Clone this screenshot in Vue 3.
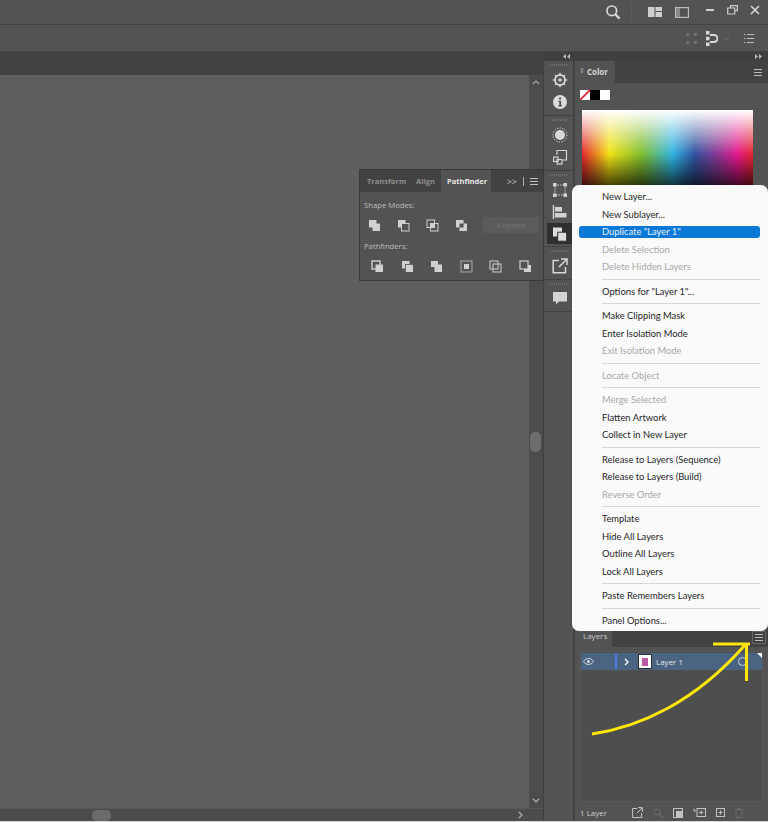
<template>
  <div class="app">
    <header class="titlebar">
      <svg class="tb-ic search" width="16" height="16" viewBox="0 0 16 16"><circle cx="6.8" cy="6.8" r="4.8" fill="none" stroke="#d8d8d8" stroke-width="1.7" /><path d="M10.4 10.4 14.6 14.6" stroke="#d8d8d8" stroke-width="2.2" /></svg>
      <span class="tb-sep"></span>
      <svg class="tb-ic" width="14" height="10" viewBox="0 0 14 10"><path d="M0 0h6.5v10H0zM7.5 0H14v4H7.5zM7.5 5H14v5H7.5z" fill="#cfcfcf" /></svg>
      <svg class="tb-ic" width="14" height="11" viewBox="0 0 14 11"><rect x=".6" y=".6" width="12.8" height="9.8" fill="none" stroke="#bdbdbd" stroke-width="1.2" /><rect x="1" y="1" width="4" height="9" fill="#8a8a8a" /></svg>
      <div class="win-btns">
        <svg width="10" height="10" viewBox="0 0 10 10"><path d="M1 5h8" stroke="#cfcfcf" stroke-width="2" /></svg>
        <svg width="11" height="10" viewBox="0 0 11 10"><path d="M3.5 2.5V.7h6.8v5H8M.7 3h7v6h-7z" fill="none" stroke="#cfcfcf" stroke-width="1.2" /></svg>
        <svg width="10" height="10" viewBox="0 0 10 10"><path d="M1 1l8 8M9 1l-8 8" stroke="#d4d4d4" stroke-width="1.7" /></svg>
      </div>
    </header>

    <div class="controlbar">
      <svg width="11" height="11" viewBox="0 0 11 11"><path d="M0 0h3v3H0zM8 0h3v3H8zM0 8h3v3H0zM8 8h3v3H8z" fill="#6e6e6e" /></svg>
      <svg class="cb-align" width="12" height="15" viewBox="0 0 12 15"><path d="M0 0h3.500v3.500H0zM0 5.700h3.500v3.500H0zM0 11.500h3.500V15H0z" fill="#d8d8d8" /><path d="M4 4h4a3.500 3.500 0 0 1 0 7H4" fill="none" stroke="#d8d8d8" stroke-width="2" /></svg>
      <svg class="cb-chev" width="7" height="5" viewBox="0 0 7 5"><path d="M.5 1 3.500 4 6.500 1" fill="none" stroke="#707070" /></svg>
      <svg class="cb-list" width="10" height="9" viewBox="0 0 10 9"><path d="M0 .5h1.500M3 .5h7M0 4.500h1.500M3 4.500h7M0 8.500h1.500M3 8.500h7" stroke="#bcbcbc" /></svg>
    </div>

    <div class="workspace">
      <div class="docarea">
        <div class="doctabs"></div>
        <div class="canvas-row">
          <div class="canvas"></div>
          <div class="vscroll">
            <svg width="8" height="5" viewBox="0 0 8 5"><path d="M1 4 4 1l3 3" fill="none" stroke="#a5a5a5" stroke-width="1.200" /></svg>
            <span class="vthumb"></span>
            <svg width="8" height="5" viewBox="0 0 8 5"><path d="M1 1l3 3 3-3" fill="none" stroke="#b5b5b5" stroke-width="1.200" /></svg>
          </div>
        </div>
        <div class="hscroll">
          <span class="hthumb"></span>
          <svg width="5" height="8" viewBox="0 0 5 8"><path d="M1 1l3 3-3 3" fill="none" stroke="#b0b0b0" stroke-width="1.200" /></svg>
        </div>
      </div>

      <div class="dockcol">
        <div class="collapse-bar collapse-left">
          <svg width="7" height="5" viewBox="0 0 7 5"><path d="M3 0v5L0 2.500zM7 0v5L4 2.500z" fill="#b8b8b8" /></svg>
        </div>
        <div class="dock">
          <div v-for="g in dockGroups" :key="g.id" class="dock-group">
            <div class="grip" :style="{ height: g.head + 'px' }"></div>
            <div v-for="ic in g.icons" :key="ic.id" class="dock-icon" :class="{ active: ic.active }">
              <svg width="16" height="16" viewBox="0 0 16 16" v-html="ic.svg"></svg>
            </div>
          </div>
        </div>
      </div>

      <aside class="panels">
        <div class="collapse-bar collapse-right">
          <svg width="7" height="5" viewBox="0 0 7 5"><path d="M0 0v5l3-2.500zM4 0v5l3-2.500z" fill="#b8b8b8" /></svg>
        </div>
        <section class="color-panel">
          <div class="tabbar">
            <div class="tab"><span class="updown">⇕</span>Color</div>
            <span class="burger"><i></i><i></i><i></i></span>
          </div>
          <div class="swatches">
            <svg width="10" height="10" viewBox="0 0 10 10"><rect width="10" height="10" fill="#fff" /><path d="M0 10 10 0" stroke="#d9252e" stroke-width="1.800" /></svg>
            <span class="sw black"></span>
            <span class="sw white"></span>
          </div>
          <div class="spectrum"></div>
        </section>

        <section class="layers-panel">
          <div class="tabbar layers-tabs">
            <div class="tab">Layers</div>
            <span class="burger boxed"><i></i><i></i><i></i></span>
          </div>
          <div class="layer-list">
            <div class="layer-row">
              <svg class="eye" width="11" height="7" viewBox="0 0 11 7"><path d="M.5 3.500C2 1.300 3.700.5 5.500.5s3.500.8 5 3c-1.500 2.200-3.200 3-5 3s-3.500-.8-5-3z" fill="none" stroke="#d8dde2" /><circle cx="5.500" cy="3.500" r="1.500" fill="#d8dde2" /></svg>
              <span class="layer-color"></span>
              <svg class="twirl" width="5" height="8" viewBox="0 0 5 8"><path d="M1 1l3 3-3 3" fill="none" stroke="#fff" stroke-width="1.300" /></svg>
              <span class="thumb"><i></i></span>
              <span class="layer-name">Layer 1</span>
              <span class="target"></span>
              <span class="corner"></span>
            </div>
          </div>
          <footer class="layers-foot">
            <span class="count">1 Layer</span>
            <svg width="11" height="11" viewBox="0 0 11 11"><path d="M5 1.500H.6v9h9V6M6 .6h4.400V5M10 1 5 6" fill="none" stroke="#c4c4c4" /></svg>
            <svg width="10" height="10" viewBox="0 0 10 10"><circle cx="4" cy="4" r="3" fill="none" stroke="#6d6d6d" /><path d="M6.500 6.500 9.500 9.500" stroke="#6d6d6d" stroke-width="1.300" /></svg>
            <svg width="10" height="10" viewBox="0 0 10 10"><rect x=".5" y=".5" width="9" height="9" fill="none" stroke="#c4c4c4" /><rect x="3" y="3" width="6" height="6" fill="#c4c4c4" /></svg>
            <svg width="13" height="9" viewBox="0 0 13 9"><rect x="4" y=".5" width="8.500" height="8" fill="none" stroke="#c4c4c4" /><path d="M8.200 2.500v4M6.200 4.500h4M1 .5v2.500h2" fill="none" stroke="#c4c4c4" /></svg>
            <svg width="9" height="9" viewBox="0 0 9 9"><rect x=".5" y=".5" width="8" height="8" fill="none" stroke="#c4c4c4" /><path d="M4.500 2.500v4M2.500 4.500h4" stroke="#c4c4c4" /></svg>
            <svg width="8" height="10" viewBox="0 0 8 10"><path d="M0 1.500h8M1 2v7.500h6V2M3 1V.5h2V1" fill="none" stroke="#6a6a6a" /></svg>
          </footer>
        </section>
      </aside>
    </div>
    <div class="bottom-edge"></div>

    <!-- floating pathfinder panel -->
    <div class="pathfinder">
      <div class="pf-tabs">
        <span class="pf-tab t-transform">Transform</span>
        <span class="pf-tab t-align">Align</span>
        <span class="pf-tab current">Pathfinder</span>
        <span class="pf-more">&gt;&gt;</span>
        <span class="pf-bar"></span>
        <span class="burger small"><i></i><i></i><i></i></span>
      </div>
      <div class="pf-body">
        <div class="pf-label">Shape Modes:</div>
        <div class="pf-shapes">
          <svg v-for="s in shapeIcons" :key="s.id" width="13" height="13" viewBox="0 0 13 13" v-html="s.svg"></svg>
          <span class="pf-expand">Expand</span>
        </div>
        <div class="pf-label second">Pathfinders:</div>
        <div class="pf-finders">
          <svg v-for="s in finderIcons" :key="s.id" width="13" height="13" viewBox="0 0 13 13" v-html="s.svg"></svg>
        </div>
      </div>
    </div>

    <!-- context menu -->
    <ul class="menu">
      <template v-for="(m, i) in menu" :key="i">
        <li v-if="m.sep" class="menu-sep"></li>
        <li v-else class="menu-item" :class="{ off: m.off, hot: m.hot }">{{ m.label }}</li>
      </template>
    </ul>

    <!-- hand drawn annotation -->
    <svg class="annotation" width="768" height="822" viewBox="0 0 768 822">
      <path d="M592 734C640 727 695 702 745 645M713 644H750M746.500 644V681" fill="none" stroke="#ffe60a" stroke-width="3" />
    </svg>
  </div>
</template>

<script setup>
const g = '#d2d2d2'

const dockGroups = [
  {
    id: 'a',
    head: 8,
    icons: [
      { id: 'gear', svg: `<circle cx="8" cy="8" r="5" fill="none" stroke="${g}" stroke-width="2"/><circle cx="8" cy="8" r="1.800" fill="${g}"/><path d="M8 .8v3M8 12.200v3M.8 8h3M12.200 8h3M2.900 2.900l2.100 2.100M11 11l2.100 2.100M13.100 2.900 11 5M5 11l-2.100 2.100" stroke="${g}" stroke-width="1.300"/>` },
      { id: 'info', svg: `<circle cx="8" cy="8" r="7" fill="#dcdcdc"/><path d="M6.500 6.800h2.600v4.500h1v1.200H6.300v-1.200h1V8H6.500zM7.200 3.500h1.900v2H7.200z" fill="#4d4d4d"/>` }
    ]
  },
  {
    id: 'b',
    head: 8,
    icons: [
      { id: 'sun', svg: `<circle cx="8" cy="8" r="5" fill="#d8d8d8"/><circle cx="8" cy="8" r="7" fill="none" stroke="#d8d8d8" stroke-dasharray="1.300 1.400"/>` },
      { id: 'transform', svg: `<path d="M5 6V1.500h9.500V11H11" fill="none" stroke="${g}" stroke-width="1.200"/><rect x="1.600" y="8" width="4.500" height="4.500" fill="none" stroke="${g}" stroke-width="1.200"/><rect x="5" y="10.500" width="5" height="4.500" fill="none" stroke="${g}" stroke-width="1.200"/>` }
    ]
  },
  {
    id: 'c',
    head: 8,
    icons: [
      { id: 'bbox', svg: `<rect x="3" y="3" width="10" height="10" fill="none" stroke="${g}" stroke-dasharray="1.500 1"/><path d="M1 1h3.500v3.500H1zM11.500 1H15v3.500h-3.500zM1 11.500h3.500V15H1zM11.500 11.500H15V15h-3.500z" fill="${g}"/>` },
      { id: 'align', svg: `<path d="M1.500 1v14" stroke="${g}" stroke-width="1.500"/><path d="M3 3h7v4.500H3zM3 9h11.500v4.500H3z" fill="${g}"/>` },
      { id: 'pathfinder', active: true, svg: `<rect x="1" y="1.500" width="9" height="9" fill="#dcdcdc"/><rect x="5.700" y="6.200" width="9" height="9" fill="#dcdcdc" stroke="#2f2f2f"/>` }
    ]
  },
  {
    id: 'd',
    head: 8,
    icons: [
      { id: 'export', svg: `<path d="M7 2.500H1.200v12.300h12.300V9M9 1h6v6M14.800 1.200 7 9" fill="none" stroke="#d8d8d8" stroke-width="1.500"/>` }
    ]
  },
  {
    id: 'e',
    head: 7,
    icons: [
      { id: 'comment', svg: `<path d="M1 2h14v9.500H7L4 14.500v-3H1z" fill="#d4d4d4"/>` }
    ]
  }
]

// small square pairs used by the pathfinder panel
const c = '#d0d0d0'
const shapeIcons = [
  { id: 'unite', svg: `<path d="M1 1h7.500v3.500H12V12H4.500V8.500H1z" fill="${c}"/>` },
  { id: 'front', svg: `<path d="M1 1h7.500v3.500H4.500v4H1z" fill="${c}"/><rect x="4.500" y="4.500" width="7.500" height="7.500" fill="none" stroke="${c}"/>` },
  { id: 'intersect', svg: `<rect x="1" y="1" width="7.500" height="7.500" fill="none" stroke="${c}"/><rect x="4.500" y="4.500" width="7.500" height="7.500" fill="none" stroke="${c}"/><rect x="4.500" y="4.500" width="4" height="4" fill="${c}"/>` },
  { id: 'exclude', svg: `<path d="M1 1h7.500v3.500H4.500v4H1zM8.500 4.500H12V12H4.500V8.500h4z" fill="${c}"/>` }
]
const finderIcons = [
  { id: 'divide', svg: `<rect x="1" y="1" width="8" height="8" fill="none" stroke="${c}" stroke-width="1.400"/><path d="M4.500 4.500H12V12H4.500z" fill="${c}"/>` },
  { id: 'trim', svg: `<path d="M1 1h7.500v3H4v4.500H1z" fill="${c}"/><path d="M4.800 4.800H12V12H4.800z" fill="${c}"/>` },
  { id: 'merge', svg: `<path d="M1 1h7v3.500H12V12H4.500V7H1z" fill="${c}"/>` },
  { id: 'crop', svg: `<rect x="1" y="1" width="11" height="11" fill="none" stroke="#a8a8a8"/><rect x="4" y="4" width="5" height="5" fill="${c}"/>` },
  { id: 'outline', svg: `<rect x="1" y="1" width="8" height="8" fill="none" stroke="${c}"/><rect x="4" y="4" width="8" height="8" fill="none" stroke="${c}"/>` },
  { id: 'minus', svg: `<rect x="1" y="1" width="8" height="8" fill="none" stroke="${c}" stroke-width="1.200"/><path d="M9 5h3v7H5V9h4z" fill="${c}"/>` }
]

const menu = [
  { label: 'New Layer...' },
  { label: 'New Sublayer...' },
  { label: 'Duplicate "Layer 1"', hot: true },
  { label: 'Delete Selection', off: true },
  { label: 'Delete Hidden Layers', off: true },
  { sep: true },
  { label: 'Options for "Layer 1"...' },
  { sep: true },
  { label: 'Make Clipping Mask' },
  { label: 'Enter Isolation Mode' },
  { label: 'Exit Isolation Mode', off: true },
  { sep: true },
  { label: 'Locate Object', off: true },
  { sep: true },
  { label: 'Merge Selected', off: true },
  { label: 'Flatten Artwork' },
  { label: 'Collect in New Layer' },
  { sep: true },
  { label: 'Release to Layers (Sequence)' },
  { label: 'Release to Layers (Build)' },
  { label: 'Reverse Order', off: true },
  { sep: true },
  { label: 'Template' },
  { label: 'Hide All Layers' },
  { label: 'Outline All Layers' },
  { label: 'Lock All Layers' },
  { sep: true },
  { label: 'Paste Remembers Layers' },
  { sep: true },
  { label: 'Panel Options...' }
]
</script>

<style>
html, body { margin: 0; background: #535353; }
</style>

<style scoped>
.app { position: relative; width: 768px; height: 822px; overflow: hidden; display: flex; flex-direction: column; background: #535353; font-family: "Open Sans", "Liberation Sans", sans-serif; }

.titlebar { height: 24px; flex: none; display: flex; align-items: center; justify-content: flex-end; background: #535353; border-bottom: 1px solid #424242; }
.tb-ic { flex: none; margin-right: 13px; }
.search { margin-right: 10px; }
.tb-sep { width: 1px; height: 18px; background: #5c5c5c; margin-right: 16px; }
.win-btns { display: flex; align-items: center; gap: 12px; margin-right: 8px; margin-left: 3px; padding-bottom: 4px; }

.controlbar { height: 26px; flex: none; display: flex; align-items: center; justify-content: flex-end; gap: 9px; padding-right: 14px; background: #535353; border-bottom: 1px solid #424242; }
.cb-chev { margin-left: -4px; margin-right: 5px; }

.workspace { flex: 1; min-height: 0; display: flex; }

.docarea { width: 543px; flex: none; display: flex; flex-direction: column; border-right: 1px solid #3f3f3f; }
.doctabs { height: 23px; flex: none; background: #424242; }
.canvas-row { flex: 1; min-height: 0; display: flex; }
.canvas { flex: 1; background: #5f5f5f; }
.vscroll { width: 14px; flex: none; display: flex; flex-direction: column; align-items: center; justify-content: space-between; padding: 5px 0; background: #4c4c4c; box-sizing: border-box; position: relative; }
.vthumb { width: 11px; height: 20px; border-radius: 5px; background: #6d6d6d; position: absolute; top: 357px; left: 1px; }
.hscroll { height: 12px; flex: none; display: flex; align-items: center; justify-content: space-between; padding: 0 20px 0 92px; background: #4c4c4c; border-top: 1px solid #575757; }
.hthumb { width: 19px; height: 11px; border-radius: 5px; background: #6a6a6a; }

.dockcol { width: 31px; flex: none; display: flex; flex-direction: column; background: #424242; }
.collapse-bar { height: 9px; flex: none; background: #404040; display: flex; align-items: center; justify-content: flex-end; }
.collapse-left { padding-right: 5px; }
.collapse-right { padding-right: 6px; }
.dock { width: 29px; background: #535353; border-right: 1px solid #3f3f3f; flex: 1; }
.dock-group { border-bottom: 1px solid #434343; padding-bottom: 2px; }
.grip { background: repeating-linear-gradient(90deg, #6e6e6e 0 1px, transparent 1px 2px) center 3px / 18px 2px no-repeat; }
.dock-icon { width: 25px; height: 22px; margin-left: 3px; display: flex; align-items: center; justify-content: center; }
.dock-icon.active { background: #2f2f2f; height: 21px; }

.panels { flex: 1; min-width: 0; display: flex; flex-direction: column; background: #535353; }
.color-panel { flex: 1; min-height: 0; display: flex; flex-direction: column; }
.tabbar { height: 22px; flex: none; display: flex; align-items: stretch; justify-content: space-between; background: #424242; }
.tab { width: 40px; padding-left: 4px; padding-bottom: 2px; box-sizing: border-box; background: #535353; color: #d6d6d6; font-size: 8px; font-weight: 700; display: flex; align-items: center; gap: 2px; }
.updown { font-size: 7px; color: #aaa; font-weight: 400; font-family: "DejaVu Sans", sans-serif; }
.burger { width: 8px; display: flex; flex-direction: column; justify-content: center; gap: 2px; margin-right: 6px; }
.burger i { display: block; height: 1px; background: #bdbdbd; }
.swatches { display: flex; gap: 0; padding: 7px 0 0 5px; }
.sw { width: 10px; height: 10px; margin-left: 0; }
.sw.black { background: #000; }
.sw.white { background: #fff; }
.spectrum { height: 100px; margin: 10px 15px 0 7px; background:
  linear-gradient(#fff 0%, rgba(255,255,255,0) 50%, rgba(0,0,0,0) 50%, #000 100%),
  linear-gradient(90deg, #e2262c 0%, #f2e313 16%, #7ebd2f 35%, #2fb4e2 53%, #31529f 66%, #9c3190 82%, #e5178a 91%, #e2262c 100%);
  background-size: 100% 88px; background-repeat: no-repeat; }

.layers-panel { height: 194px; flex: none; display: flex; flex-direction: column; }
.layers-tabs { height: 20px; }
.layers-tabs .tab { width: 37px; padding-left: 8px; color: #c8c8c8; font-weight: 400; align-items: flex-start; padding-top: 3px; line-height: 12px; }
.burger.boxed { width: 8px; padding: 0 2px; margin-right: 2px; align-self: center; height: 11px; border: 1px solid #666; }
.layer-list { flex: 1; margin: 4px 5px 2px 5px; background: #4e4e4e; border: 1px solid #585858; }
.layer-row { height: 17px; margin-top: 1px; display: flex; align-items: center; background: #4a6482; position: relative; }
.eye { margin-left: 2px; }
.layer-color { width: 2px; height: 15px; background: #4a7ae0; margin-left: 21px; }
.twirl { margin-left: 7px; }
.thumb { width: 14px; height: 15px; background: #fff; margin-left: 9px; border: 1px solid #2d2d2d; box-sizing: border-box; display: flex; align-items: center; justify-content: center; }
.thumb i { width: 6px; height: 8px; background: #bb5aa2; }
.layer-name { color: #e6e6e6; font-size: 8px; margin-left: 4px; }
.target { width: 7px; height: 7px; border: 1px solid #cfd4da; border-radius: 50%; position: absolute; left: 157px; top: 4px; }
.corner { position: absolute; right: 0; top: 0; border-top: 5px solid #fff; border-left: 5px solid transparent; }
.layers-foot { height: 17px; flex: none; display: flex; align-items: center; gap: 10px; padding-left: 5px; }
.count { color: #cfcfcf; font-size: 8px; width: 42px; }

.bottom-edge { height: 1px; flex: none; background: #d8d8d8; }

.pathfinder { position: absolute; left: 359px; top: 169px; width: 185px; height: 112px; box-sizing: border-box; background: #535353; border: 1px solid #3a3a3a; }
.pf-tabs { height: 22px; display: flex; align-items: stretch; background: #424242; font-size: 7.500px; font-weight: 700; color: #8f8f8f; }
.pf-tab { display: flex; align-items: center; box-sizing: border-box; }
.t-transform { width: 51px; padding-left: 7px; }
.t-align { width: 30px; padding-left: 5px; }
.pf-tab.current { width: 50px; background: #535353; color: #e8e8e8; padding-left: 6px; }
.pf-more { margin-left: auto; align-self: center; color: #c6c6c6; font-weight: 400; font-size: 9px; }
.pf-bar { width: 1px; height: 9px; background: #aaa; align-self: center; margin: 0 6px; }
.burger.small { margin-right: 5px; }
.pf-body { padding: 7px 4px 0; }
.pf-label { color: #bdbdbd; font-size: 7.700px; line-height: 12px; }
.pf-label.second { margin-top: 7px; }
.pf-shapes { display: flex; align-items: center; gap: 16px; padding: 6px 0 0 4px; height: 16px; }
.pf-shapes svg, .pf-finders svg { flex: none; }
.pf-expand { flex: none; margin-left: -1px; width: 56px; height: 16px; background: #5b5b5b; color: #727272; font-size: 8px; line-height: 16px; text-align: center; }
.pf-finders { display: flex; gap: 16.500px; padding: 8px 0 0 7px; }

.menu { position: absolute; left: 572px; top: 185px; width: 196px; height: 446px; box-sizing: border-box; margin: 0; padding: 3px 0 0; list-style: none; background: #fafafa; border-radius: 7px; font-family: Lato, "Open Sans", sans-serif; font-size: 9.400px; color: #1f1f1f; }
.menu-item { height: 17.500px; line-height: 17.500px; margin: 0 8px 0 7px; padding-left: 23px; white-space: nowrap; }
.menu-item.off { color: #a8a8a8; }
.menu-item.hot { background: #0a78d6; color: #e8f2fb; border-radius: 3px; height: 12px; line-height: 12px; margin-top: 3px; margin-bottom: 2.500px; }
.menu-sep { height: 7px; display: flex; margin: 0 0 0 30px; }
.menu-sep::before { content: ""; align-self: center; width: 158px; height: 1px; background: #d8d8d8; }

.annotation { position: absolute; left: 0; top: 0; pointer-events: none; }
</style>
